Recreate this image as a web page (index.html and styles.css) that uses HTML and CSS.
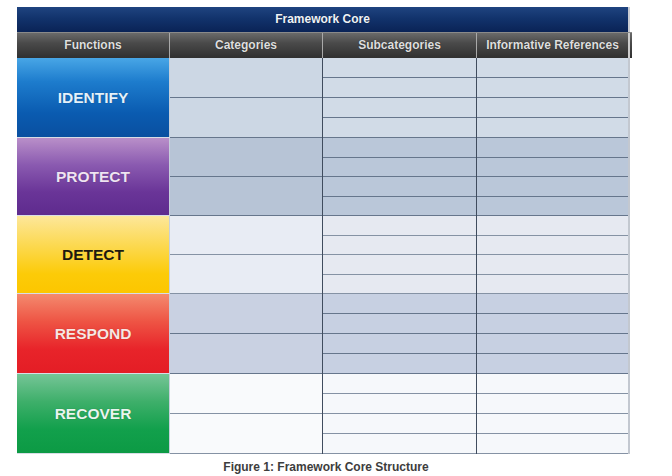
FILE: index.html
```html
<!DOCTYPE html>
<html>
<head>
<meta charset="utf-8">
<link rel="stylesheet" href="styles.css">
</head>
<body>
<div class="figure">
  <div class="core">
    <div class="title">Framework Core</div>
    <div class="head">
      <div class="hcell">Functions</div>
      <div class="hcell">Categories</div>
      <div class="hcell">Subcategories</div>
      <div class="hcell last">Informative References</div>
    </div>
    <div class="block b-identify">
      <div class="fn fn-identify">IDENTIFY</div>
      <div class="col cat"><div></div><div></div></div>
      <div class="col sub"><div></div><div></div><div></div><div></div></div>
      <div class="col ref"><div></div><div></div><div></div><div></div></div>
    </div>
    <div class="block b-protect">
      <div class="fn fn-protect">PROTECT</div>
      <div class="col cat"><div></div><div></div></div>
      <div class="col sub"><div></div><div></div><div></div><div></div></div>
      <div class="col ref"><div></div><div></div><div></div><div></div></div>
    </div>
    <div class="block b-detect">
      <div class="fn fn-detect">DETECT</div>
      <div class="col cat"><div></div><div></div></div>
      <div class="col sub"><div></div><div></div><div></div><div></div></div>
      <div class="col ref"><div></div><div></div><div></div><div></div></div>
    </div>
    <div class="block b-respond">
      <div class="fn fn-respond">RESPOND</div>
      <div class="col cat"><div></div><div></div></div>
      <div class="col sub"><div></div><div></div><div></div><div></div></div>
      <div class="col ref"><div></div><div></div><div></div><div></div></div>
    </div>
    <div class="block b-recover">
      <div class="fn fn-recover">RECOVER</div>
      <div class="col cat"><div></div><div></div></div>
      <div class="col sub"><div></div><div></div><div></div><div></div></div>
      <div class="col ref"><div></div><div></div><div></div><div></div></div>
    </div>
  </div>
  <div class="caption">Figure 1: Framework Core Structure</div>
</div>
</body>
</html>
```

FILE: styles.css
```css
html, body {
  margin: 0;
  padding: 0;
  background: #ffffff;
  font-family: "Liberation Sans", Arial, sans-serif;
}

.figure {
  width: 672px;
  padding-top: 7px;
}

.core {
  margin-left: 17px;
  width: 613px;
  display: flex;
  flex-direction: column;
}

.title {
  height: 25px;
  background: linear-gradient(to bottom, #1f4480 0%, #12336c 45%, #0a2356 100%);
  color: #eef2f8;
  font-weight: bold;
  font-size: 12px;
  line-height: 25px;
  text-align: center;
  text-shadow: 0 0 1px rgba(0, 0, 0, 0.5);
  border-right: 2px solid #c9ccd3;
}

.head {
  display: grid;
  grid-template-columns: 153px 153px 154px 153px;
  height: 26px;
  background: linear-gradient(to bottom, #6a6a6a 0%, #4a4a4a 40%, #303030 100%);
  border-top: 1px solid #8a8a8a;
  box-sizing: border-box;
  margin-right: -2px;
}

.hcell {
  color: #dedede;
  font-weight: bold;
  font-size: 12px;
  line-height: 25px;
  text-align: center;
  border-right: 1px solid #a9a9a9;
  text-shadow: 0 0 1px rgba(0, 0, 0, 0.6);
}

.hcell.last {
  border-right: 2px solid #cdcdcd;
}

.block {
  display: grid;
  grid-template-columns: 153px 153px 154px 153px;
  height: 80px;
}

.b-protect, .b-detect { height: 78px; }

.fn {
  display: flex;
  align-items: center;
  justify-content: center;
  font-weight: bold;
  font-size: 15.5px;
  color: #eef3fb;
  border-bottom: 1px solid #d8dde6;
  border-right: 1px solid #c7d0dc;
  box-sizing: border-box;
  text-shadow: 0 0 1px rgba(0, 0, 0, 0.35);
}

.fn-identify { background: linear-gradient(to bottom, #48a6e6 0%, #1d7ccd 30%, #0a5bb0 70%, #0a4fa0 100%); color: #e4f1fb; }
.fn-protect { background: linear-gradient(to bottom, #b98fc9 0%, #8a5ab0 35%, #6a3598 70%, #5e2b8e 100%); color: #efe4f2; }
.fn-detect { background: linear-gradient(to bottom, #fde79a 0%, #fcd84d 40%, #fccb08 75%, #fcc600 100%); color: #1e1a10; text-shadow: none; }
.fn-respond { background: linear-gradient(to bottom, #f48a6e 0%, #ee5444 35%, #e8242a 70%, #e41d25 100%); color: #f9e6e2; }
.fn-recover { background: linear-gradient(to bottom, #76c597 0%, #3eaf6a 35%, #12a04c 70%, #0c9a44 100%); color: #e9f5ee; }

.col {
  display: flex;
  flex-direction: column;
  border-right: 1px solid #404c5e;
}

.col.ref {
  border-right: 2px solid #c3c8d0;
}

.col > div {
  flex: 1;
  border-bottom: 1px solid #66768c;
}

.b-identify .col { background: #d1dbe7; }
.b-protect .col { background: #bac7d9; }
.b-detect .col { background: #e6e9f1; }
.b-respond .col { background: #c7d0e2; }
.b-recover .col { background: #f6f8fb; }

.b-identify .col.cat { background: #ccd7e4; }
.b-protect .col.cat { background: #b7c4d6; }
.b-detect .col.cat { background: #e8ecf4; }
.b-respond .col.cat { background: #c9d1e2; }
.b-recover .col.cat { background: #f9fafc; }

.b-detect .col > div, .b-recover .col > div {
  border-bottom-color: #8592a4;
}

.caption {
  margin-top: 6px;
  text-align: center;
  font-weight: bold;
  font-size: 12px;
  color: #3d3d3d;
  padding-right: 20px;
}
```
